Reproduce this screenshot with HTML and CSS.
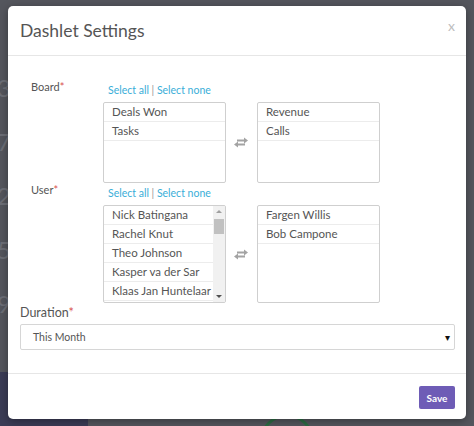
FILE: index.html
```html
<!DOCTYPE html>
<html lang="en">
<head>
  <meta charset="UTF-8">
  <title>Dashlet Settings</title>
  <link rel="stylesheet" href="styles.css">
</head>
<body>
  <!-- dashboard behind the dialog -->
  <div class="dash">
    <div class="stats">
      <div class="stat">3</div>
      <div class="stat">7</div>
      <div class="stat">2</div>
      <div class="stat">5</div>
      <div class="stat">9</div>
    </div>
    <div class="dash-bottom">
      <div class="side"></div>
      <div class="chart"><span class="ring"></span></div>
    </div>
  </div>

  <!-- Dialog -->
  <div class="modal">
    <div class="modal-header">
      <h4>Dashlet Settings</h4>
      <span class="close">x</span>
    </div>

    <div class="modal-body">
      <div class="field">
        <label>Board<em>*</em></label>
        <div class="field-ctl">
          <div class="picks"><a href="#">Select all</a> | <a href="#">Select none</a></div>
          <div class="dual">
            <ul class="list">
              <li>Deals Won</li>
              <li>Tasks</li>
            </ul>
            <div class="swap">
              <svg width="16" height="11" viewBox="0 0 16 11"><path d="M4 2.6h7V0.6l4 3-4 3V4.6H4z M12 6.4H5v-2l-4 3 4 3v-2h7z" fill="#a3a3a3"/></svg>
            </div>
            <ul class="list">
              <li>Revenue</li>
              <li>Calls</li>
            </ul>
          </div>
        </div>
      </div>

      <div class="field">
        <label>User<em>*</em></label>
        <div class="field-ctl">
          <div class="picks"><a href="#">Select all</a> | <a href="#">Select none</a></div>
          <div class="dual">
            <div class="listbox">
              <ul class="list tall">
                <li>Nick Batingana</li>
                <li>Rachel Knut</li>
                <li>Theo Johnson</li>
                <li>Kasper va der Sar</li>
                <li>Klaas Jan Huntelaar</li>
              </ul>
              <div class="scrollbar">
                <span class="sb-btn up"></span>
                <span class="sb-track"><span class="sb-thumb"></span></span>
                <span class="sb-btn down"></span>
              </div>
            </div>
            <div class="swap">
              <svg width="16" height="11" viewBox="0 0 16 11"><path d="M4 2.6h7V0.6l4 3-4 3V4.6H4z M12 6.4H5v-2l-4 3 4 3v-2h7z" fill="#a3a3a3"/></svg>
            </div>
            <ul class="list tall">
              <li>Fargen Willis</li>
              <li>Bob Campone</li>
            </ul>
          </div>
        </div>
      </div>

      <div class="duration">
        <label>Duration<em>*</em></label>
        <div class="select">
          <span>This Month</span>
          <span class="caret">&#9662;</span>
        </div>
      </div>
    </div>

    <div class="modal-footer">
      <button class="btn-save">Save</button>
    </div>
  </div>
</body>
</html>
```

FILE: styles.css
```css
body {
  margin: 0;
  width: 474px;
  height: 426px;
  overflow: hidden;
  position: relative;
  font-family: 'Lato', 'Liberation Sans', sans-serif;
  background-color: #54565d;
  color: #555;
}

/* Dashboard (dimmed) */
.dash {
  height: 426px;
  display: flex;
  flex-direction: column;
}

.stats {
  flex: 1;
  padding-top: 74px;
  display: flex;
  flex-direction: column;
  gap: 26px;
}

.stat {
  width: 8px;
  overflow: hidden;
  font-size: 24px;
  line-height: 28px;
  color: #6c6e76;
  text-indent: -3px;
}

.dash-bottom {
  height: 54px;
  display: flex;
}

.dash-bottom .side {
  width: 88px;
  background-color: #3b3c56;
}

.dash-bottom .chart {
  flex: 1;
  position: relative;
  overflow: hidden;
}

.ring {
  position: absolute;
  left: 172px;
  top: 42px;
  width: 48px;
  height: 48px;
  border: 3px solid #2c6b43;
  border-radius: 50%;
}

/* Modal */
.modal {
  position: absolute;
  left: 8px;
  top: 6px;
  width: 458px;
  height: 413px;
  background-color: #fff;
  border-radius: 5px;
  box-shadow: 0 2px 8px rgba(0, 0, 0, 0.35);
  display: flex;
  flex-direction: column;
}

.modal-header {
  height: 49px;
  border-bottom: 1px solid #e6e6e6;
  display: flex;
  align-items: center;
  justify-content: space-between;
  padding: 0 11px 0 12px;
}

.modal-header h4 {
  margin: 0;
  font-size: 17.5px;
  font-weight: normal;
  color: #555;
}

.close {
  color: #bdbdbd;
  font-size: 14px;
  margin-top: -10px;
}

.modal-body {
  flex: 1;
  padding: 26px 11px 0 12px;
}

.field {
  display: flex;
  margin-bottom: 2px;
}

.field label {
  width: 72px;
  padding-left: 11px;
  margin-top: -3px;
  font-size: 11px;
  line-height: 16px;
}

em {
  color: #d9534f;
  font-style: normal;
}

.picks {
  height: 16px;
  line-height: 16px;
  margin-bottom: 4px;
  padding-left: 5px;
  font-size: 10.5px;
  color: #999;
}

.picks a {
  color: #3aaed8;
  text-decoration: none;
}

.dual {
  display: flex;
}

.list {
  list-style: none;
  margin: 0;
  padding: 0;
  width: 121px;
  height: 79px;
  border: 1px solid #cfcfcf;
  border-radius: 2px;
  overflow: hidden;
}

.list.tall {
  height: 96px;
}

.list li {
  height: 18px;
  line-height: 18px;
  border-bottom: 1px solid #ececec;
  padding-left: 8px;
  font-size: 11.5px;
  color: #555;
  white-space: nowrap;
}

/* list with a scroll bar on the right */
.listbox {
  width: 121px;
  height: 96px;
  border: 1px solid #cfcfcf;
  border-radius: 2px;
  display: flex;
  overflow: hidden;
}

.listbox .list {
  flex: 1;
  width: auto;
  border: none;
  border-radius: 0;
}

.scrollbar {
  width: 12px;
  background-color: #f1f1f1;
  display: flex;
  flex-direction: column;
}

.sb-btn {
  height: 11px;
  display: flex;
  align-items: center;
  justify-content: center;
}

.sb-btn.up::before,
.sb-btn.down::before {
  content: '';
  border-left: 3px solid transparent;
  border-right: 3px solid transparent;
}

.sb-btn.up::before {
  border-bottom: 3px solid #a0a0a0;
}

.sb-btn.down::before {
  border-top: 3px solid #505050;
}

.sb-track {
  flex: 1;
  padding: 2px 1px 0;
}

.sb-thumb {
  display: block;
  height: 15px;
  background-color: #c1c1c1;
}

.swap {
  width: 31px;
  display: flex;
  align-items: center;
  justify-content: center;
  padding-right: 2px;
  box-sizing: border-box;
}

.duration label {
  display: block;
  font-size: 12.5px;
  line-height: 16px;
}

.select {
  margin-top: 3px;
  height: 24px;
  border: 1px solid #d6d6d6;
  border-radius: 2px;
  display: flex;
  align-items: center;
  justify-content: space-between;
  padding: 0 4px 0 12px;
  font-size: 10.5px;
}

.caret {
  color: #111;
  font-size: 10px;
}

/* Footer */
.modal-footer {
  height: 46px;
  border-top: 1px solid #e6e6e6;
  display: flex;
  justify-content: flex-end;
  padding: 12px 11px 0 0;
  box-sizing: border-box;
}

.btn-save {
  width: 36px;
  height: 23px;
  padding: 0;
  border: none;
  border-radius: 2px;
  background-color: #6e5cb6;
  color: #fff;
  font-family: inherit;
  font-size: 10px;
  font-weight: bold;
}
```
